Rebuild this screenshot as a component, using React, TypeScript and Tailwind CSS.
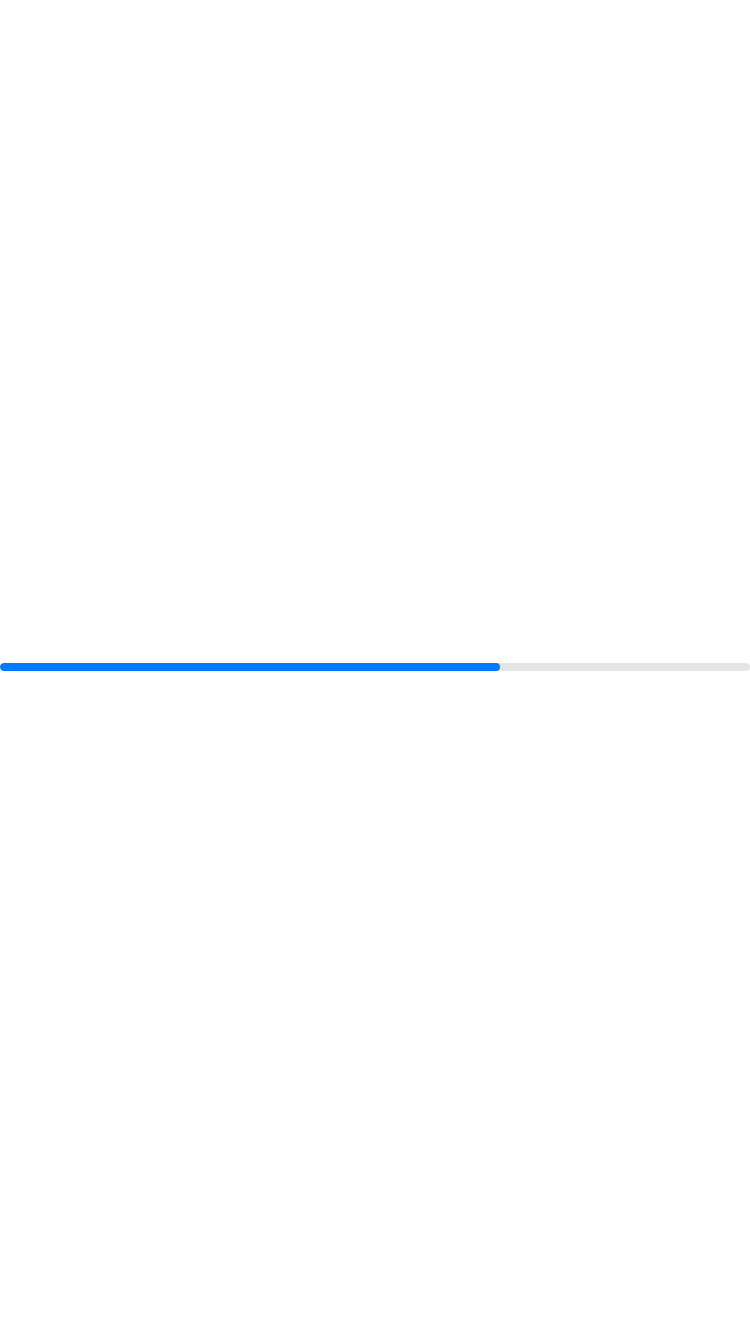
export default function App() {
  const progress = 2 / 3

  return (
    <div className="h-screen w-full bg-white flex flex-col justify-center">
      <div className="h-2 w-full rounded-full bg-[#e4e4e4] overflow-hidden">
        <div
          className="h-full rounded-full bg-[#007aff]"
          style={{ width: `${progress * 100}%` }}
        />
      </div>
    </div>
  )
}
